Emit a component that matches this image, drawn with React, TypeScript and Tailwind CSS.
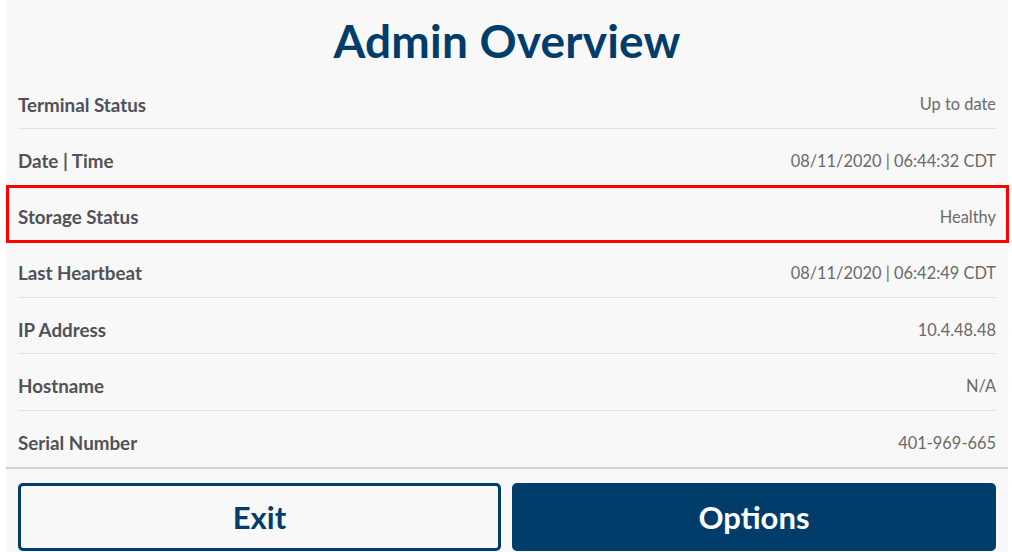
import React from "react";

const rows: { label: string; value: React.ReactNode; highlight?: boolean }[] = [
  { label: "Terminal Status", value: "Up to date" },
  { label: "Date | Time", value: "08/11/2020 | 06:44:32 CDT" },
  { label: "Storage Status", value: "Healthy", highlight: true },
  { label: "Last Heartbeat", value: "08/11/2020 | 06:42:49 CDT" },
  { label: "IP Address", value: "10.4.48.48" },
  { label: "Hostname", value: "N/A" },
  { label: "Serial Number", value: "401-969-665" },
];

export default function App() {
  return (
    <div
      className="w-[1012px] h-[552px] bg-white overflow-hidden"
      style={{ fontFamily: "Lato, 'Noto Sans', sans-serif" }}
    >
      <div className="ml-[6px] w-[1002px] h-[552px] bg-[#f8f8f8] flex flex-col">
        <div className="h-[73px] shrink-0 flex items-center justify-center pt-[8px]">
          <h1 className="text-[46px] font-bold text-[#003d6b] leading-none tracking-[0.2px]">
            Admin Overview
          </h1>
        </div>
        <div className="flex flex-col shrink-0">
          {rows.map((r, i) => (
            <div key={r.label} className="relative px-[12px]">
              <div
                className={`h-[56.3px] flex items-center justify-between pt-[8px] ${
                  i < rows.length - 1 ? "border-b border-[#e2e2e2]" : ""
                }`}
              >
                <span className="text-[18.8px] font-bold text-[#4f5257]">{r.label}</span>
                <span className="text-[16.4px] text-[#6a6a6a]">{r.value}</span>
              </div>
              {r.highlight && (
                <div className="absolute left-0 right-[-1px] top-[-1px] bottom-[-1px] border-[3px] border-[#ff0000] pointer-events-none" />
              )}
            </div>
          ))}
        </div>
        <div className="shrink-0 border-t-2 border-[#d0d0d0] flex gap-[11px] px-[12px] pt-[14px]">
          <button className="w-[483px] shrink-0 h-[68px] rounded-[5px] border-[3px] border-[#003d6b] bg-[#f8f8f8] text-[#003d6b] text-[31px] font-bold">
            Exit
          </button>
          <button className="w-[484px] shrink-0 h-[68px] rounded-[5px] bg-[#003d6b] text-white text-[31px] font-bold">
            Options
          </button>
        </div>
      </div>
    </div>
  );
}
